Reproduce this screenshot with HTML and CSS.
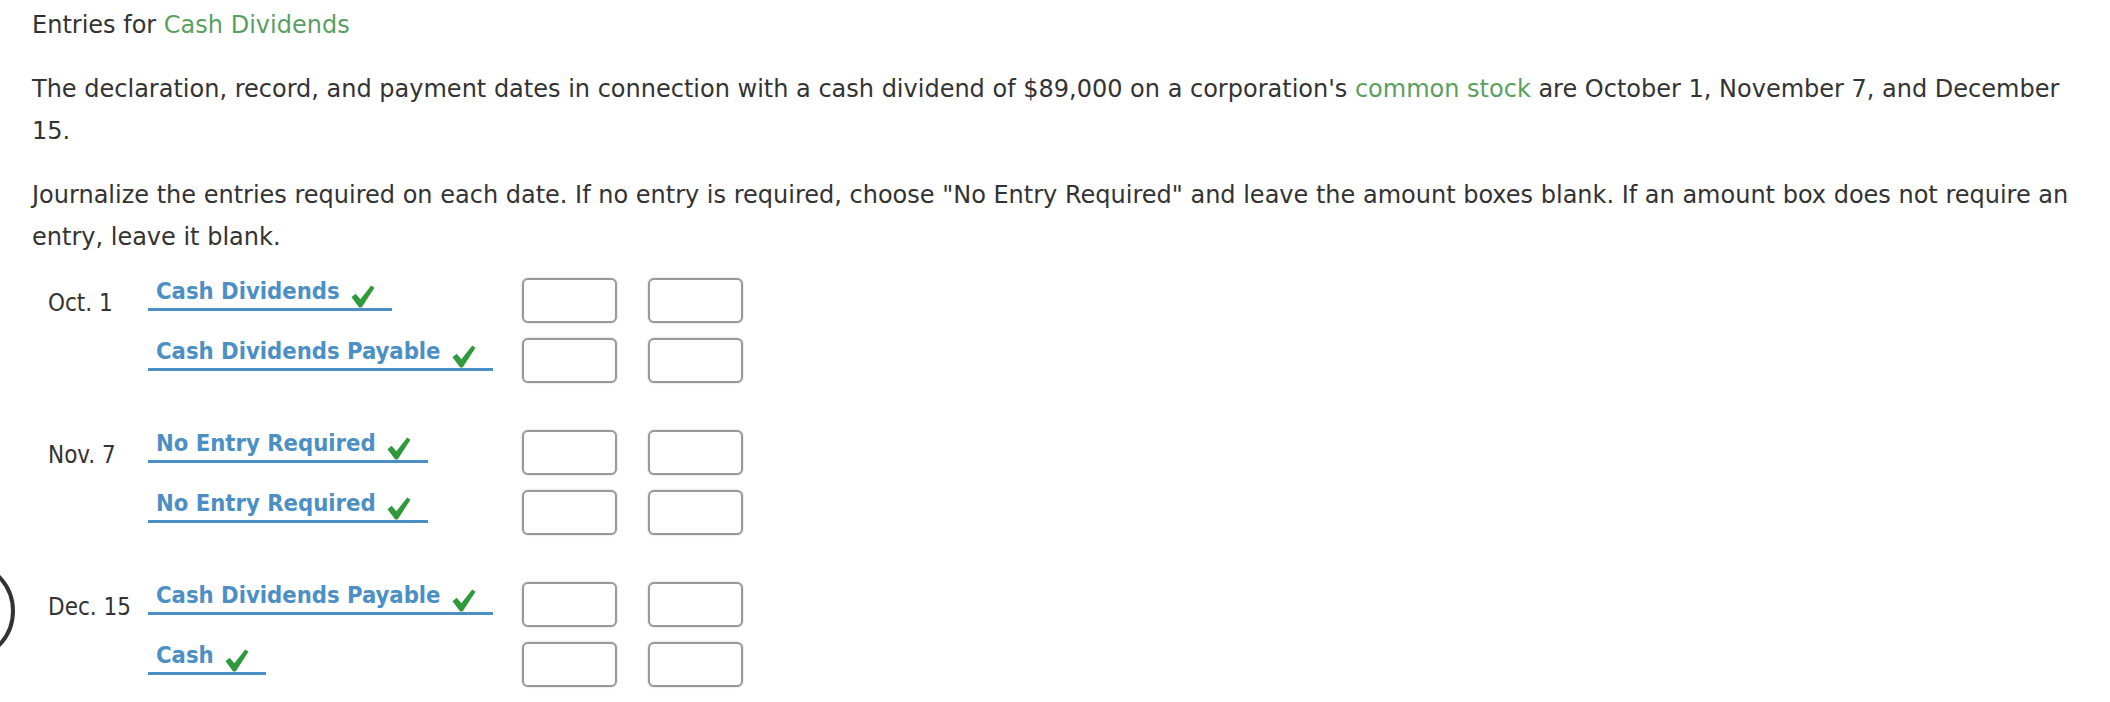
FILE: index.html
```html
<!DOCTYPE html>
<html lang="en">
<head>
    <meta charset="UTF-8">
    <title>Entries for Cash Dividends</title>
    <link rel="stylesheet" href="styles.css">
</head>
<body>
    <!-- 제목 -->
    <div class="title">Entries for <a href="#" class="term">Cash Dividends</a></div>

    <p class="text">The declaration, record, and payment dates in connection with a cash dividend of $89,000 on a corporation's <a href="#" class="term">common stock</a> are October 1, November 7, and December 15.</p>

    <p class="text">Journalize the entries required on each date. If no entry is required, choose "No Entry Required" and leave the amount boxes blank. If an amount box does not require an entry, leave it blank.</p>

    <!-- 분개 -->
    <div class="journal">
        <div class="entry-group">
            <div class="date">Oct. 1</div>
            <div class="lines">
                <div class="line">
                    <div class="account"><span class="acct"><span>Cash Dividends</span><svg class="check" viewBox="0 0 24 23"><path d="M0.5 12.2 L4.6 8.8 L9.4 14.2 L20.2 0.6 L23.5 2.8 L10.6 22.6 L8.2 22.6 Z"/></svg></span></div>
                    <input type="text" class="amount">
                    <input type="text" class="amount">
                </div>
                <div class="line">
                    <div class="account"><span class="acct"><span>Cash Dividends Payable</span><svg class="check" viewBox="0 0 24 23"><path d="M0.5 12.2 L4.6 8.8 L9.4 14.2 L20.2 0.6 L23.5 2.8 L10.6 22.6 L8.2 22.6 Z"/></svg></span></div>
                    <input type="text" class="amount">
                    <input type="text" class="amount">
                </div>
            </div>
        </div>

        <div class="entry-group">
            <div class="date">Nov. 7</div>
            <div class="lines">
                <div class="line">
                    <div class="account"><span class="acct"><span>No Entry Required</span><svg class="check" viewBox="0 0 24 23"><path d="M0.5 12.2 L4.6 8.8 L9.4 14.2 L20.2 0.6 L23.5 2.8 L10.6 22.6 L8.2 22.6 Z"/></svg></span></div>
                    <input type="text" class="amount">
                    <input type="text" class="amount">
                </div>
                <div class="line">
                    <div class="account"><span class="acct"><span>No Entry Required</span><svg class="check" viewBox="0 0 24 23"><path d="M0.5 12.2 L4.6 8.8 L9.4 14.2 L20.2 0.6 L23.5 2.8 L10.6 22.6 L8.2 22.6 Z"/></svg></span></div>
                    <input type="text" class="amount">
                    <input type="text" class="amount">
                </div>
            </div>
        </div>

        <div class="entry-group">
            <div class="date">Dec. 15</div>
            <div class="lines">
                <div class="line">
                    <div class="account"><span class="acct"><span>Cash Dividends Payable</span><svg class="check" viewBox="0 0 24 23"><path d="M0.5 12.2 L4.6 8.8 L9.4 14.2 L20.2 0.6 L23.5 2.8 L10.6 22.6 L8.2 22.6 Z"/></svg></span></div>
                    <input type="text" class="amount">
                    <input type="text" class="amount">
                </div>
                <div class="line">
                    <div class="account"><span class="acct"><span>Cash</span><svg class="check" viewBox="0 0 24 23"><path d="M0.5 12.2 L4.6 8.8 L9.4 14.2 L20.2 0.6 L23.5 2.8 L10.6 22.6 L8.2 22.6 Z"/></svg></span></div>
                    <input type="text" class="amount">
                    <input type="text" class="amount">
                </div>
            </div>
        </div>
    </div>

    <!-- 왼쪽 가장자리 원 -->
    <div class="edge-circle"></div>
</body>
</html>
```

FILE: styles.css
```css
* {
    box-sizing: border-box;
    margin: 0;
    padding: 0;
}

body {
    font-family: "DejaVu Sans", Verdana, sans-serif;
    font-size: 24px;
    line-height: 42px;
    color: #333;
    background-color: #fff;
    padding: 4px 28px 0 32px;
    position: relative;
    overflow: hidden;
    height: 702px;
}

.term {
    color: #5a9f62;
    text-decoration: none;
}

.text {
    margin-top: 22px;
}

/* 분개 영역 */
.journal {
    margin-top: 20px;
    margin-left: 16px;
}

.entry-group {
    display: flex;
    margin-bottom: 32px;
}

.date {
    width: 100px;
    padding-top: 3px;
    font-family: "DejaVu Sans Condensed", "DejaVu Sans", sans-serif;
    font-size: 24px;
    line-height: 45px;
    color: #333;
}

.line {
    display: flex;
    align-items: flex-start;
    margin-bottom: 15px;
}

.account {
    width: 374px;
    display: flex;
    align-items: flex-start;
}

.acct {
    display: flex;
    align-items: flex-start;
    height: 33px;
    padding: 0 17px 0 8px;
    border-bottom: 3px solid #4a90c6;
    font-family: "DejaVu Sans Condensed", "DejaVu Sans", sans-serif;
    font-size: 23.6px;
    font-weight: bold;
    line-height: 26px;
    color: #4b8fc5;
}

.check {
    width: 24px;
    height: 23px;
    margin-left: 11px;
    margin-top: 7px;
    fill: #2f9a3c;
}

.amount {
    width: 95px;
    height: 45px;
    margin-right: 31px;
    border: 2px solid #999;
    border-radius: 6px;
    background-color: #fff;
    box-shadow: 0 0 2px rgba(0, 0, 0, 0.25);
}

.edge-circle {
    position: absolute;
    left: -87px;
    top: 560px;
    width: 102px;
    height: 102px;
    border: 4px solid #333;
    border-radius: 50%;
}
```
